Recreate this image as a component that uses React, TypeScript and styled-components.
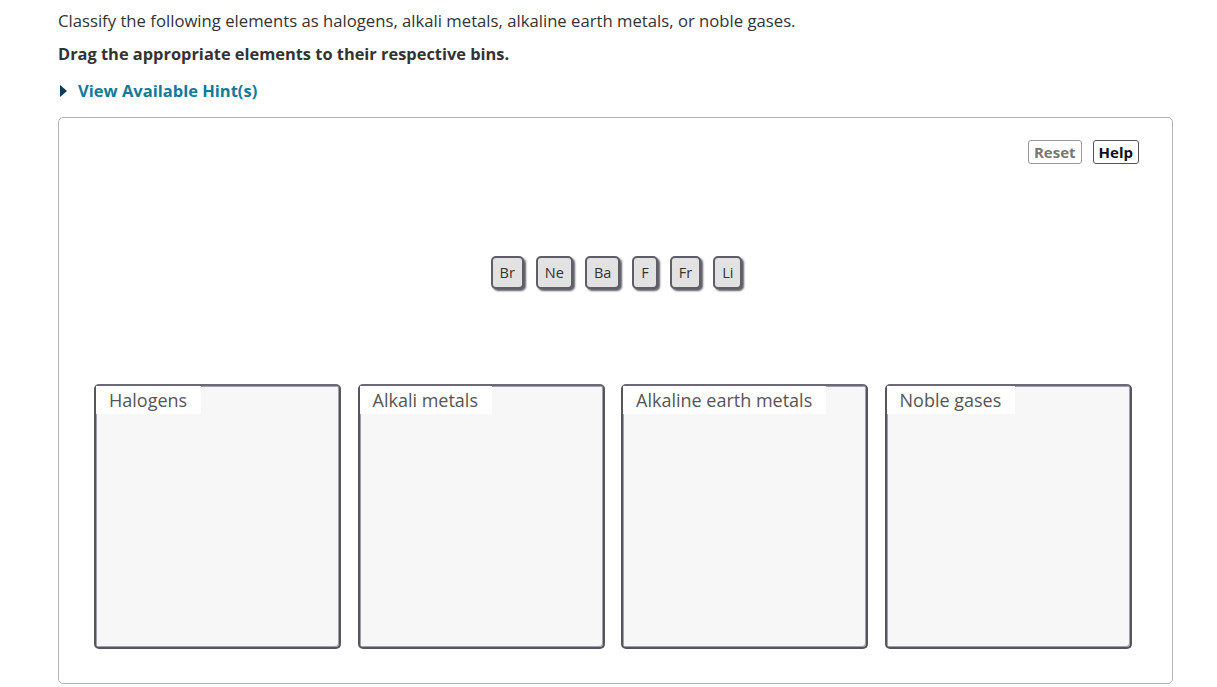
import React from 'react';
import styled, { createGlobalStyle } from 'styled-components';

const GlobalStyle = createGlobalStyle`
  html, body {
    margin: 0;
    padding: 0;
    background: #fff;
  }
  body {
    font-family: 'Open Sans', 'Noto Sans', 'Liberation Sans', sans-serif;
    color: #333;
  }
`;

const elements = ['Br', 'Ne', 'Ba', 'F', 'Fr', 'Li'];
const bins = ['Halogens', 'Alkali metals', 'Alkaline earth metals', 'Noble gases'];

export default function App() {
  return (
    <>
      <GlobalStyle />
      <Styled.Page>
        <Styled.Prompt>
          Classify the following elements as halogens, alkali metals, alkaline earth metals, or noble gases.
        </Styled.Prompt>
        <Styled.Instruction>Drag the appropriate elements to their respective bins.</Styled.Instruction>
        <Styled.Hint>
          <Styled.Caret />
          View Available Hint(s)
        </Styled.Hint>
        <Styled.Panel>
          <Styled.Toolbar>
            <Styled.ToolButton $muted>Reset</Styled.ToolButton>
            <Styled.ToolButton>Help</Styled.ToolButton>
          </Styled.Toolbar>
          <Styled.Tiles>
            {elements.map((el) => (
              <Styled.Tile key={el}>{el}</Styled.Tile>
            ))}
          </Styled.Tiles>
          <Styled.Bins>
            {bins.map((name) => (
              <Styled.Bin key={name}>
                <Styled.BinLabel>{name}</Styled.BinLabel>
              </Styled.Bin>
            ))}
          </Styled.Bins>
        </Styled.Panel>
      </Styled.Page>
    </>
  );
}

const Styled = {
  Page: styled.main`
    padding: 8px 0 0 58px;
    width: 1115px;
  `,
  Prompt: styled.p`
    margin: 0;
    font-size: 16.7px;
    line-height: 26px;
    color: #333;
  `,
  Instruction: styled.p`
    margin: 7px 0 0;
    font-size: 16.4px;
    font-weight: 700;
    line-height: 26px;
    color: #333;
  `,
  Hint: styled.div`
    display: flex;
    align-items: center;
    gap: 11px;
    margin: 11px 0 0 2px;
    font-size: 16.5px;
    font-weight: 700;
    line-height: 26px;
    color: #137a9a;
  `,
  Caret: styled.span`
    width: 0;
    height: 0;
    border-top: 6px solid transparent;
    border-bottom: 6px solid transparent;
    border-left: 7px solid #0d3b5c;
  `,
  Panel: styled.section`
    margin-top: 13px;
    box-sizing: border-box;
    height: 567px;
    border: 1px solid #b3b3b3;
    border-radius: 5px;
    padding: 22px 33px 0 35px;
  `,
  Toolbar: styled.div`
    display: flex;
    justify-content: flex-end;
    gap: 11px;
  `,
  ToolButton: styled.button<{ $muted?: boolean }>`
    font-family: inherit;
    font-size: 15px;
    font-weight: 700;
    line-height: 20px;
    padding: 1px 5px;
    background: #fff;
    color: ${(p) => (p.$muted ? '#777' : '#111')};
    border: 1px solid ${(p) => (p.$muted ? '#999' : '#555')};
    border-radius: 3px;
  `,
  Tiles: styled.div`
    display: flex;
    justify-content: center;
    gap: 12px;
    margin-top: 92px;
  `,
  Tile: styled.div`
    box-sizing: border-box;
    min-width: 23px;
    height: 33px;
    padding: 0 7px;
    display: flex;
    align-items: center;
    justify-content: center;
    font-size: 14.5px;
    color: #333;
    background: #e2e2e2;
    border: 2px solid #5e5d68;
    border-radius: 5px;
    box-shadow: 2px 2px 2px #5f5f66;
  `,
  Bins: styled.div`
    display: grid;
    grid-template-columns: repeat(4, 247px);
    column-gap: 16.5px;
    margin-top: 95px;
  `,
  Bin: styled.div`
    box-sizing: border-box;
    height: 265px;
    background: #f7f7f7;
    border: 2px solid #56555e;
    border-top-color: #6a6975;
    border-radius: 5px;
    box-shadow: inset 1px 1px 0 #a09fb0, inset -1px -1px 0 #a09fb0;
  `,
  BinLabel: styled.div`
    display: inline-block;
    background: #fff;
    padding: 2px 14px 2px 13px;
    font-size: 18px;
    line-height: 24px;
    color: #555;
  `,
};
